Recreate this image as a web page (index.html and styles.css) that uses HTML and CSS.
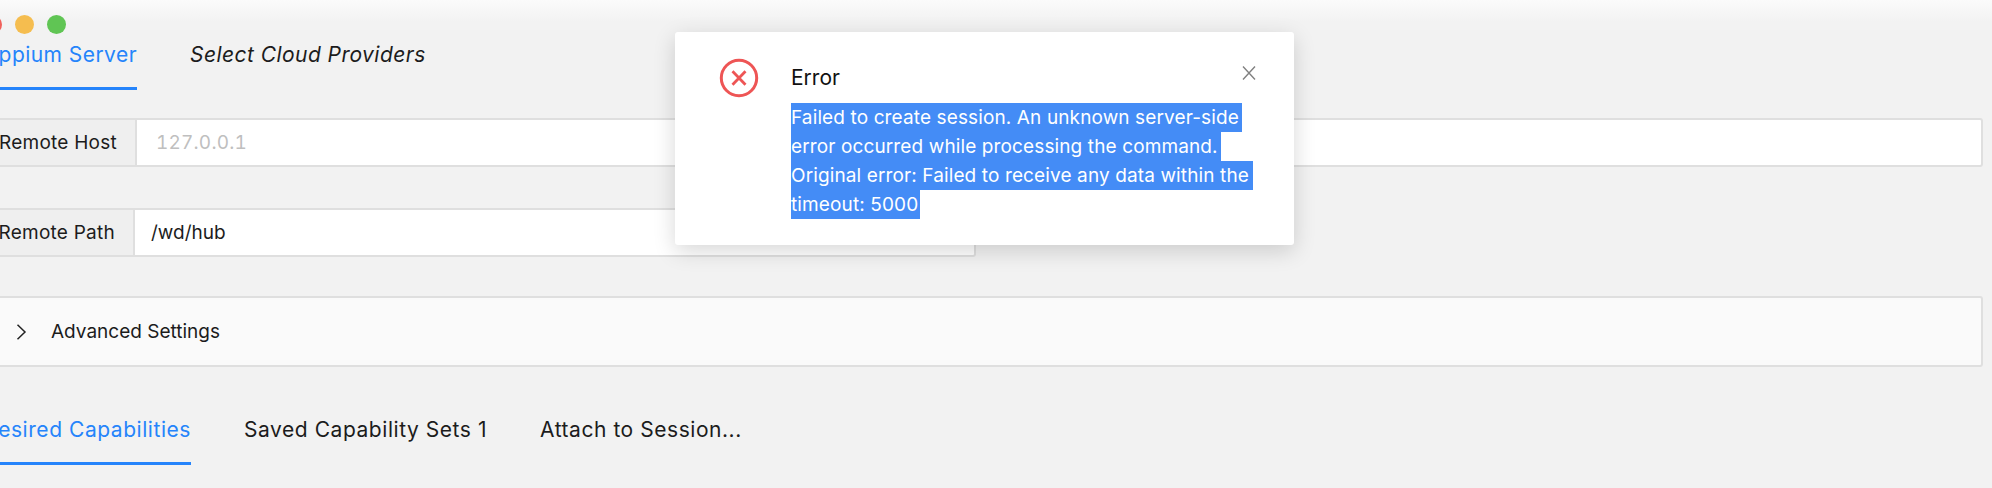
FILE: index.html
```html
<!DOCTYPE html>
<html lang="en">
<head>
<meta charset="utf-8">
<title>Appium Inspector</title>
<link rel="stylesheet" href="styles.css">
</head>
<body>
<div class="lights"><i class="light red"></i><i class="light yellow"></i><i class="light green"></i></div>
<main class="page">
  <nav class="tabs top-tabs">
    <div class="tab active server-tab">Appium Server</div>
    <div class="tab italic">Select Cloud Providers</div>
  </nav>
  <div class="field host">
    <div class="addon host-addon">Remote Host</div>
    <div class="value placeholder">127.0.0.1</div>
  </div>
  <div class="field path">
    <div class="addon path-addon">Remote Path</div>
    <div class="value path-value">/wd/hub</div>
  </div>
  <div class="panel">
    <svg class="chevron" viewBox="0 0 11 16" width="11" height="16"><path d="M1.5 .7 9 8l-7.500 7.300" fill="none" stroke="#222" stroke-width="1.5"/></svg>
    <span>Advanced Settings</span>
  </div>
  <nav class="tabs bottom-tabs">
    <div class="tab active caps-tab">Desired Capabilities</div>
    <div class="tab">Saved Capability Sets 1</div>
    <div class="tab">Attach to Session...</div>
  </nav>
</main>
<section class="modal">
  <svg class="err-icon" viewBox="0 0 40 40" width="40" height="40"><circle cx="20" cy="20" r="17.7" fill="none" stroke="#ee5555" stroke-width="3"/><path d="M13.500 13.300 26.500 26.700M26.500 13.300 13.500 26.700" fill="none" stroke="#ee5555" stroke-width="2.8"/></svg>
  <div class="modal-body">
    <div class="modal-title">Error</div>
    <div class="sel l1">Failed to create session. An unknown server-side</div>
    <div class="sel l2">error occurred while processing the command.</div>
    <div class="sel l3">Original error: Failed to receive any data within the</div>
    <div class="sel l4">timeout: 5000</div>
  </div>
  <svg class="close" viewBox="0 0 14 14" width="14" height="14"><path d="M1 .5 13 13.500M13 .5 1 13.500" fill="none" stroke="#808080" stroke-width="1.4"/></svg>
</section>
</body>
</html>
```
FILE: styles.css
```css
* { box-sizing: border-box; }
html, body { margin: 0; height: 488px; overflow: hidden; }
body {
  position: relative;
  width: 1992px;
  background: linear-gradient(#fbfbfb 0, #f2f2f2 22px);
  font-family: Inter, "Liberation Sans", sans-serif;
  color: #1c1c1c;
  font-size: 19px;
}
.lights { position: absolute; left: -17px; top: 15px; display: flex; gap: 13px; }
.light { width: 19px; height: 19px; border-radius: 50%; display: block; }
.red { background: #f0605a; }
.yellow { background: #f5bd4f; }
.green { background: #60c554; }

.page { margin-left: -30px; width: 2013px; display: flex; flex-direction: column; }
.tabs { display: flex; }
.top-tabs { padding-top: 36px; gap: 53px; height: 90px; }
.tab { height: 54px; line-height: 37px; font-size: 21px; letter-spacing: .45px; white-space: nowrap; }
.tab.active { color: #2584fb; border-bottom: 3px solid #2584fb; }
.italic { font-style: italic; }
.server-tab { width: 167px; display: flex; justify-content: flex-end; }
.field { display: flex; height: 49px; background: #fff; border: 2px solid #dfdfdf; border-radius: 3px; }
.host { margin-top: 28px; }
.path { margin-top: 41px; width: 1006px; }
.addon { display: flex; align-items: center; justify-content: flex-end; background: #efefef; border-right: 2px solid #dfdfdf; padding-right: 18px; letter-spacing: .25px; white-space: nowrap; }
.host-addon { width: 165px; }
.path-addon { width: 163px; }
.value { flex: 1; display: flex; align-items: center; padding-left: 19px; }
.path-value { padding-left: 16px; }
.placeholder { color: #bfbfbf; font-variant-numeric: tabular-nums; letter-spacing: .2px; }
.panel { display: flex; align-items: center; height: 71px; margin-top: 39px; padding-left: 44px; background: #fafafa; border: 2px solid #dfdfdf; border-radius: 3px; }
.chevron { margin-right: 24px; }
.bottom-tabs { margin-top: 43px; gap: 53px; }
.bottom-tabs .tab { height: 55px; line-height: 40px; letter-spacing: .55px; }
.caps-tab { width: 221px; display: flex; justify-content: flex-end; }

.modal {
  position: absolute; left: 675px; top: 32px; width: 619px; height: 213px;
  background: #fff; border-radius: 3px;
  box-shadow: 0 6px 22px rgba(0,0,0,.16);
  display: flex; padding: 26px 0 0 44px;
}
.err-icon { flex: none; }
.modal-body { margin-left: 32px; padding-top: 6px; }
.modal-title { font-size: 21px; line-height: 28px; margin-bottom: 11px; color: #111; }
.sel { background: #448cf6; color: #fff; height: 29px; line-height: 29px; letter-spacing: .12px; white-space: nowrap; }
.l1 { width: 451px; }
.l2 { width: 430px; }
.l3 { width: 462px; }
.l4 { width: 129px; }
.close { position: absolute; left: 567px; top: 34px; }
```
